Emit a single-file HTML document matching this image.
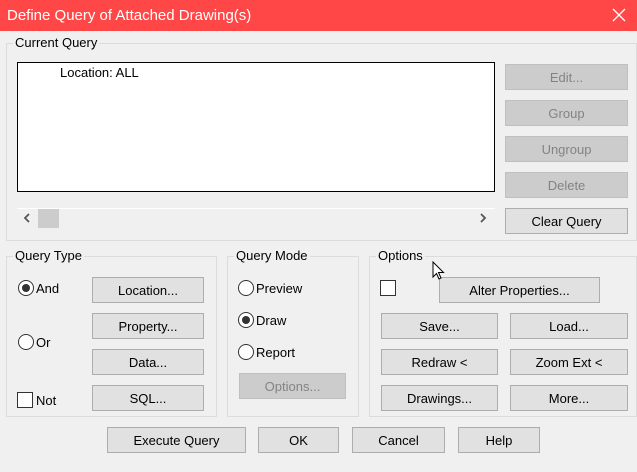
<!DOCTYPE html>
<html><head><style>
*{box-sizing:border-box;margin:0;padding:0}
body{width:637px;height:472px;background:#f0f0f0;font-family:"Liberation Sans",sans-serif;font-size:13px;color:#000;position:relative;overflow:hidden}
.a{position:absolute}
.tb{left:0;top:0;width:637px;height:31px;background:#ff4747;color:#fff;font-size:15px;line-height:31px;padding-left:7px}
.g{border:1px solid #dcdcdc}
.gl{background:#f0f0f0;padding:0 2px;line-height:14px}
.b{background:#e1e1e1;border:1px solid #adadad;text-align:center;line-height:25px;height:26px}
.d{background:#cccccc;border-color:#bfbfbf;color:#838383}
.r{width:16px;height:16px;border:1px solid #333;border-radius:50%;background:#fff}
.r.on::after{content:"";position:absolute;left:3px;top:3px;width:8px;height:8px;border-radius:50%;background:#333}
.c{width:16px;height:16px;border:1px solid #333;background:#fff}
</style></head><body>
<div class="a tb">Define Query of Attached Drawing(s)</div>
<svg class="a" style="left:612px;top:8px" width="14" height="14"><path d="M1 1L13 13M13 1L1 13" stroke="#fff" stroke-width="1.3"/></svg>

<div class="a g" style="left:6px;top:43px;width:631px;height:198px"></div>
<div class="a gl" style="left:13px;top:36px">Current Query</div>
<div class="a" style="left:17px;top:62px;width:478px;height:130px;background:#fff;border:1px solid #000"></div>
<div class="a" style="left:60px;top:65px">Location: ALL</div>
<div class="a" style="left:17px;top:208px;width:478px;height:1px;background:#fff"></div>
<div class="a" style="left:38px;top:209px;width:21px;height:19px;background:#cccccc"></div>
<svg class="a" style="left:22px;top:212px" width="10" height="12"><path d="M7 2L3 6L7 10" stroke="#555" stroke-width="1.8" fill="none"/></svg>
<svg class="a" style="left:478px;top:212px" width="10" height="12"><path d="M3 2L7 6L3 10" stroke="#555" stroke-width="1.8" fill="none"/></svg>
<div class="a b d" style="left:505px;top:64px;width:123px">Edit...</div>
<div class="a b d" style="left:505px;top:100px;width:123px">Group</div>
<div class="a b d" style="left:505px;top:136px;width:123px">Ungroup</div>
<div class="a b d" style="left:505px;top:172px;width:123px">Delete</div>
<div class="a b" style="left:505px;top:208px;width:123px">Clear Query</div>

<div class="a g" style="left:6px;top:256px;width:211px;height:161px"></div>
<div class="a gl" style="left:13px;top:249px">Query Type</div>
<div class="a r on" style="left:18px;top:280px"></div><div class="a" style="left:36px;top:281px">And</div>
<div class="a r" style="left:18px;top:334px"></div><div class="a" style="left:36px;top:335px">Or</div>
<div class="a c" style="left:17px;top:392px"></div><div class="a" style="left:36px;top:393px">Not</div>
<div class="a b" style="left:92px;top:277px;width:112px">Location...</div>
<div class="a b" style="left:92px;top:313px;width:112px">Property...</div>
<div class="a b" style="left:92px;top:349px;width:112px">Data...</div>
<div class="a b" style="left:92px;top:385px;width:112px">SQL...</div>

<div class="a g" style="left:227px;top:256px;width:132px;height:161px"></div>
<div class="a gl" style="left:234px;top:249px">Query Mode</div>
<div class="a r" style="left:238px;top:280px"></div><div class="a" style="left:256px;top:281px">Preview</div>
<div class="a r on" style="left:238px;top:312px"></div><div class="a" style="left:256px;top:313px">Draw</div>
<div class="a r" style="left:238px;top:344px"></div><div class="a" style="left:256px;top:345px">Report</div>
<div class="a b d" style="left:239px;top:373px;width:107px">Options...</div>

<div class="a g" style="left:369px;top:256px;width:268px;height:161px"></div>
<div class="a gl" style="left:376px;top:249px">Options</div>
<div class="a c" style="left:380px;top:280px"></div>
<div class="a b" style="left:439px;top:277px;width:161px">Alter Properties...</div>
<div class="a b" style="left:381px;top:313px;width:117px">Save...</div>
<div class="a b" style="left:510px;top:313px;width:118px">Load...</div>
<div class="a b" style="left:381px;top:349px;width:117px">Redraw &lt;</div>
<div class="a b" style="left:510px;top:349px;width:118px">Zoom Ext &lt;</div>
<div class="a b" style="left:381px;top:385px;width:117px">Drawings...</div>
<div class="a b" style="left:510px;top:385px;width:118px">More...</div>

<div class="a b" style="left:107px;top:427px;width:139px">Execute Query</div>
<div class="a b" style="left:258px;top:427px;width:81px">OK</div>
<div class="a b" style="left:352px;top:427px;width:93px">Cancel</div>
<div class="a b" style="left:458px;top:427px;width:82px">Help</div>

<svg class="a" style="left:432px;top:261px" width="14" height="20"><path d="M1 1L1 16L4.5 12.5L7 18L9 17L6.5 11.5L11.5 11.5Z" fill="#fff" stroke="#000" stroke-width="1"/></svg>
</body></html>
